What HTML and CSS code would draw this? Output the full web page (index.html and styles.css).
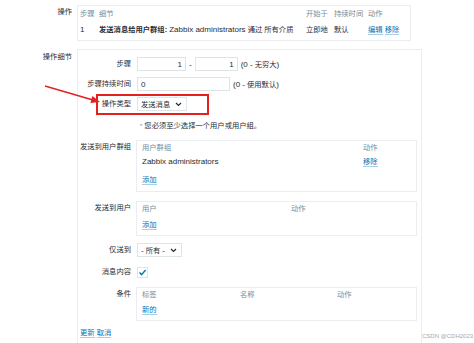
FILE: index.html
```html
<!DOCTYPE html>
<html lang="zh">
<head>
  <meta charset="UTF-8">
  <title>操作细节</title>
  <link rel="stylesheet" href="styles.css">
</head>
<body>
  <div class="page">
    <div class="row">
      <div class="label first">操作</div>
      <div class="box ops">
        <table class="list">
          <tr class="head">
            <td class="c-step">步骤</td>
            <td class="c-detail">细节</td>
            <td class="c-start">开始于</td>
            <td class="c-dur">持续时间</td>
            <td>动作</td>
          </tr>
          <tr class="item">
            <td class="en">1</td>
            <td><b>发送消息给用户群组:</b> <span class="en">Zabbix administrators</span> 通过 所有介质</td>
            <td>立即地</td>
            <td>默认</td>
            <td><a href="#">编辑</a> <a href="#">移除</a></td>
          </tr>
        </table>
      </div>
    </div>

    <div class="row">
      <div class="label second">操作细节</div>
      <div class="box details">
        <div class="field">
          <label>步骤</label>
          <div class="control">
            <input class="num step-from" value="1">
            <span class="en">-</span>
            <input class="num step-to" value="1">
            <span class="hint"><span class="en">(0 -</span> 无穷大<span class="en">)</span></span>
          </div>
        </div>
        <div class="field">
          <label>步骤持续时间</label>
          <div class="control">
            <input class="duration" value="0">
            <span class="hint"><span class="en">(0 -</span> 使用默认<span class="en">)</span></span>
          </div>
        </div>
        <div class="field">
          <label>操作类型</label>
          <div class="control">
            <div class="select">发送消息
              <svg width="7" height="5" viewBox="0 0 7 5"><path d="M1 1 L3.5 3.5 L6 1" fill="none" stroke="#1f2c33" stroke-width="1.2"/></svg>
            </div>
          </div>
        </div>
        <div class="field note-row">
          <span></span>
          <div class="note"><span class="star">*</span> 您必须至少选择一个用户或用户组。</div>
        </div>

        <div class="field block">
          <label>发送到用户群组</label>
          <div class="box inner groups">
            <div class="tr head"><span class="g-name">用户群组</span><span>动作</span></div>
            <div class="tr"><span class="g-name en">Zabbix administrators</span><span><a href="#">移除</a></span></div>
            <div class="add"><a href="#">添加</a></div>
          </div>
        </div>

        <div class="field block">
          <label>发送到用户</label>
          <div class="box inner users">
            <div class="tr head"><span class="u-name">用户</span><span>动作</span></div>
            <div class="add"><a href="#">添加</a></div>
          </div>
        </div>

        <div class="field">
          <label>仅送到</label>
          <div class="control">
            <div class="select"><span><span class="en">-</span> 所有 <span class="en">-</span></span>
              <svg width="7" height="5" viewBox="0 0 7 5"><path d="M1 1 L3.5 3.5 L6 1" fill="none" stroke="#1f2c33" stroke-width="1.2"/></svg>
            </div>
          </div>
        </div>

        <div class="field check-row">
          <label>消息内容</label>
          <div class="control">
            <span class="checkbox">
              <svg width="9" height="9" viewBox="0 0 9 9"><path d="M1.5 4.5 L3.6 6.6 L7.6 2" fill="none" stroke="#0275b8" stroke-width="1.4"/></svg>
            </span>
          </div>
        </div>

        <div class="field block">
          <label>条件</label>
          <div class="box inner conds">
            <div class="tr head"><span class="k-tag">标签</span><span class="k-name">名称</span><span>动作</span></div>
            <div class="add"><a href="#">新的</a></div>
          </div>
        </div>

        <div class="buttons"><a href="#">更新</a> <a href="#">取消</a></div>
      </div>
    </div>

    <div class="marker"></div>
    <svg class="arrow" width="474" height="343" viewBox="0 0 474 343">
      <line x1="45" y1="86" x2="93" y2="100" stroke="#e3211f" stroke-width="1.6"/>
      <polygon points="100,102 90.4,102.9 92.4,96.1" fill="#e3211f"/>
    </svg>
    <div class="watermark">CSDN @CDH2023</div>
  </div>
</body>
</html>
```

FILE: styles.css
```css
body {
  margin: 0;
  background: #fff;
  font-family: Arial, "Liberation Sans", "Noto Sans CJK SC", sans-serif;
  font-size: 7.3px;
  color: #1f2c33;
}
.en {
  font-size: 8px;
}
a {
  color: #0275b8;
  text-decoration: none;
  border-bottom: 1px solid rgba(2, 117, 184, 0.35);
}
.page {
  position: relative;
  height: 343px;
  overflow: hidden;
  padding-top: 5px;
  box-sizing: border-box;
}
.row {
  display: grid;
  grid-template-columns: 72px auto;
  column-gap: 5px;
  align-items: start;
}
.label {
  text-align: right;
  line-height: 12px;
  white-space: nowrap;
}
.label.first {
  padding-top: 1px;
}
.label.second {
  padding-top: 10px;
}
.box {
  border: 1px solid #ebeef0;
}
.ops {
  width: 332px;
  padding: 1px 0;
}
.list {
  border-collapse: collapse;
  width: 100%;
  table-layout: fixed;
}
.list td {
  padding: 0;
  white-space: nowrap;
  overflow: hidden;
}
.list .head td {
  height: 12px;
  color: #768d99;
}
.list .item td {
  height: 20px;
}
.list td:first-child {
  padding-left: 2px;
}
.c-step {
  width: 19px;
}
.c-detail {
  width: 207px;
}
.c-start {
  width: 28px;
}
.c-dur {
  width: 34px;
}
.details {
  width: 343px;
  margin-top: 8px;
  padding: 7px 0 40px;
}
.field {
  display: grid;
  grid-template-columns: 53px auto;
  column-gap: 6px;
  align-items: center;
  margin-bottom: 6px;
  height: 14px;
}
.field label {
  text-align: right;
  line-height: 12px;
  white-space: nowrap;
}
.control {
  display: flex;
  align-items: center;
  gap: 3px;
  white-space: nowrap;
}
input {
  box-sizing: border-box;
  height: 14px;
  border: 1px solid #dfe4e7;
  font: inherit;
  font-size: 8px;
  color: #1f2c33;
  padding: 0 3px;
  margin: 0;
}
.num {
  text-align: right;
}
.step-from {
  width: 49px;
}
.step-to {
  width: 43px;
}
.duration {
  width: 93px;
}
.select {
  display: inline-flex;
  align-items: center;
  gap: 5px;
  box-sizing: border-box;
  height: 14px;
  border: 1px solid #dfe4e7;
  padding: 0 4px 0 3px;
}
.note-row {
  margin-top: 9px;
  margin-bottom: 8px;
  height: 12px;
}
.note {
  padding-left: 3px;
  line-height: 12px;
}
.star {
  color: #768d99;
  font-size: 6px;
  vertical-align: top;
}
.field.block {
  height: auto;
  align-items: start;
  column-gap: 5px;
  margin-bottom: 9px;
}
.field.block label {
  padding-top: 1px;
}
.inner {
  width: 269px;
  padding: 0 5px;
}
.tr {
  display: flex;
  height: 14px;
  line-height: 14px;
  white-space: nowrap;
}
.tr.head {
  color: #768d99;
}
.g-name {
  width: 221px;
}
.u-name {
  width: 149px;
}
.k-tag {
  width: 98px;
}
.k-name {
  width: 97px;
}
.add {
  line-height: 12px;
}
.groups .add {
  margin-top: 5px;
  padding-bottom: 5px;
}
.users .add {
  margin-top: 3px;
  padding-bottom: 4px;
}
.conds .add {
  margin-top: 2px;
  padding-bottom: 4px;
}
.field.block:has(.users) {
  margin-bottom: 7px;
}
.check-row {
  margin-top: 9px;
  margin-bottom: 9px;
  height: 12px;
}
.checkbox {
  display: inline-flex;
  align-items: center;
  justify-content: center;
  box-sizing: border-box;
  width: 11px;
  height: 11px;
  border: 1px solid #dfe4e7;
}
.buttons {
  margin-top: -3px;
  padding-left: 2px;
  line-height: 12px;
}
.marker {
  position: absolute;
  left: 96px;
  top: 94px;
  width: 109px;
  height: 17px;
  border: 2px solid #e3211f;
}
.arrow {
  position: absolute;
  left: 0;
  top: 0;
  pointer-events: none;
}
.watermark {
  position: absolute;
  left: 422px;
  top: 333px;
  font-size: 6px;
  color: #a0a8ad;
  white-space: nowrap;
}
```
